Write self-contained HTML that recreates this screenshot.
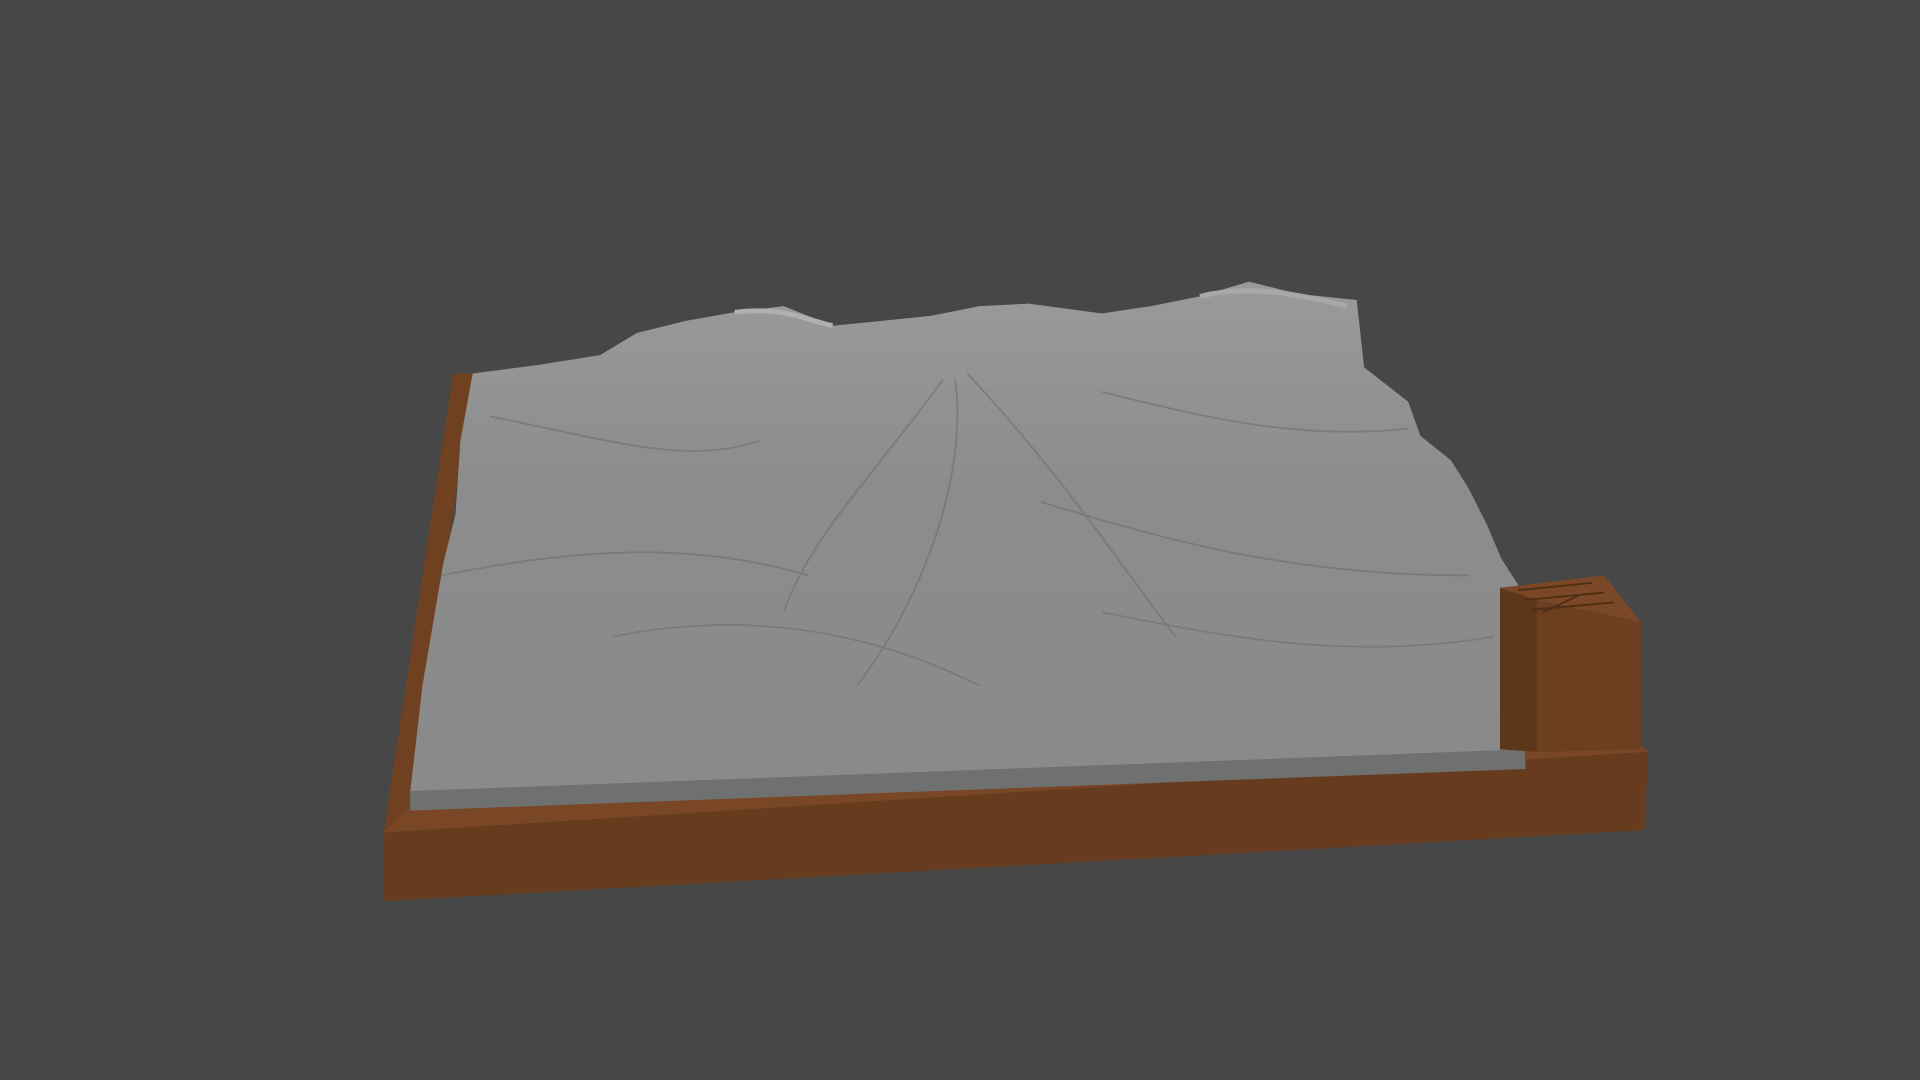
<!DOCTYPE html>
<html><head><meta charset="utf-8"><style>
html,body{margin:0;padding:0;background:#474747;width:1920px;height:1080px;overflow:hidden}
svg{display:block}
</style></head><body>
<svg width="1920" height="1080" viewBox="0 0 1568 882" preserveAspectRatio="none">
<defs>
<linearGradient id="t" x1="0" y1="0" x2="0" y2="1">
<stop offset="0" stop-color="#9a9a9a"/><stop offset="0.4" stop-color="#8c8c8c"/><stop offset="1" stop-color="#8a8a8a"/>
</linearGradient>
</defs>
<rect width="1568" height="882" fill="#474747"/>
<!-- brown left rim -->
<polygon points="370,305 386,305 336,660 313,682" fill="#6f4120"/>
<!-- brown front rim top -->
<polygon points="313,680 1346,614 1330,600 336,658" fill="#7a4726"/>
<!-- brown front face -->
<polygon points="313,680 1346,614 1343,678 313,736" fill="#673c1e"/>
<!-- gray terrain -->
<polygon fill="url(#t)" points="386,305 440,298 490,290 520,272 560,262 600,255 640,250 680,266 720,262 760,258 800,250 840,248 900,256 940,250 980,242 1020,230 1060,240 1108,245 1114,300 1150,328 1160,356 1185,376 1200,400 1215,430 1226,456 1240,478 1245,612 335,647 345,560 362,460 372,420 376,360"/>
<!-- gray front slab -->
<polygon points="335,646 1245,612 1246,628 335,662" fill="#6f7171"/>
<!-- some terrain shading -->
<g stroke="#6f6f6f" stroke-width="1.5" fill="none" opacity="0.6">
<path d="M770,310 C720,380 660,440 640,500"/>
<path d="M780,310 C790,380 760,480 700,560"/>
<path d="M790,305 C860,380 900,440 960,520"/>
<path d="M400,340 C500,360 560,380 620,360"/>
<path d="M360,470 C460,450 560,440 660,470"/>
<path d="M900,320 C980,340 1060,360 1150,350"/>
<path d="M850,410 C950,440 1050,470 1200,470"/>
<path d="M500,520 C600,500 700,510 800,560"/>
<path d="M900,500 C1000,520 1100,540 1220,520"/>
</g>
<path d="M600,255 C640,250 660,262 680,266" stroke="#b0b0b0" stroke-width="4" fill="none"/>
<path d="M980,242 C1020,232 1060,240 1100,250" stroke="#a8a8a8" stroke-width="4" fill="none"/>
<!-- box -->
<polygon points="1225,480 1255,490 1255,614 1225,612" fill="#5e361a"/>
<polygon points="1255,490 1340,508 1340,612 1255,614" fill="#6b3f20"/>
<polygon points="1225,480 1310,470 1340,508 1255,490" fill="#7a4828"/>
<g stroke="#4f2d14" stroke-width="1.5" fill="none">
<path d="M1240,482 L1300,476 M1245,490 L1310,484 M1250,498 L1318,492 M1260,500 L1290,486"/>
</g>
</svg>
</body></html>
